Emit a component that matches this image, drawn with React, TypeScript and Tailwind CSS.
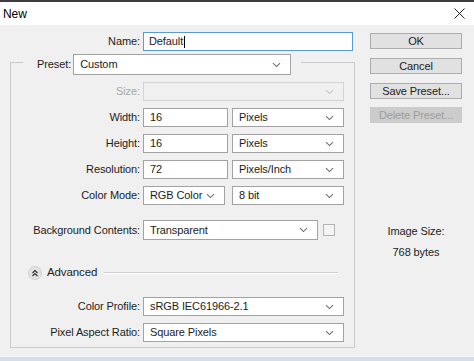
import React from "react";

const Chevron = ({ light = false }: { light?: boolean }) => (
  <svg width="9" height="6" viewBox="0 0 9 6" className="shrink-0">
    <path d="M1 1.2 L4.5 4.6 L8 1.2" fill="none" stroke={light ? "#c4c4c4" : "#6e6e6e"} strokeWidth="1.1" />
  </svg>
);

const Select = ({ value, w, h = 19, disabled = false }: { value: string; w: string; h?: number; disabled?: boolean }) => (
  <div
    className={`${w} flex items-center justify-between pl-[6px] pr-[9px] border ${
      disabled ? "bg-[#f0f0f0] border-[#d3d3d3]" : "bg-white border-[#a2a2a2]"
    }`}
    style={{ height: h }}
  >
    <span className="leading-none">{value}</span>
    <Chevron light={disabled} />
  </div>
);

const Input = ({ value, w }: { value: string; w: string }) => (
  <div className={`${w} h-[19px] flex items-center pl-[6px] bg-white border border-[#a2a2a2]`}>
    <span className="leading-none">{value}</span>
  </div>
);

const Label = ({ children, gray = false }: { children: React.ReactNode; gray?: boolean }) => (
  <div className={`w-[132px] text-right pr-[3px] shrink-0 ${gray ? "text-[#a8a8a8]" : "text-[#1c1c1c]"}`}>{children}</div>
);

const Btn = ({ children, cls = "", disabled = false }: { children: React.ReactNode; cls?: string; disabled?: boolean }) => (
  <div
    className={`h-[16px] w-[92px] flex items-center justify-center border ${
      disabled ? "bg-[#cccccc] border-[#cccccc] text-[#9d9d9d]" : "bg-[#e1e1e1] border-[#adadad] text-[#1c1c1c]"
    } ${cls}`}
  >
    <span className="leading-none">{children}</span>
  </div>
);

export default function App() {
  return (
    <div
      className="w-[474px] h-[361px] bg-[#f0f0f0] overflow-hidden flex flex-col text-[11px] tracking-[-0.1px] text-[#1c1c1c]"
      style={{ fontFamily: '"Liberation Sans", Arial, sans-serif' }}
    >
      <div className="h-[2px] bg-[#3d3d3d] shrink-0" />
      <div className="h-[23px] bg-white shrink-0 flex items-center justify-between pl-[3px] pr-[9px]">
        <span className="text-[12px] text-black leading-none">New</span>
        <svg width="11" height="11" viewBox="0 0 11 11">
          <path d="M0.5 0.5 L10.5 10.5 M10.5 0.5 L0.5 10.5" stroke="#222" strokeWidth="1" />
        </svg>
      </div>
      <div className="flex h-[331px] shrink-0">
        {/* left */}
        <div className="w-[362px] pt-[7px] flex flex-col">
          <div className="flex items-center">
            <div className="w-[143px] text-right pr-[3px]">Name:</div>
            <div className="w-[210px] h-[19px] flex items-center pl-[5px] bg-white border border-[#5b9bd5]">
              <span className="leading-none">Default</span>
              <span className="w-[1px] h-[12px] bg-black ml-[1px]" />
            </div>
          </div>
          <div className="mt-[11px] ml-[10px] w-[345px] border border-[#cacaca] pb-[5px] flex flex-col">
            {/* legend row */}
            <div className="-mt-[9px] ml-[12px] w-[278px] bg-[#f0f0f0] pl-[14px] pr-[8px] flex items-center">
              <span className="pr-[2px]">Preset:</span>
              <Select value="Custom" w="w-[218px]" h={21} />
            </div>
            <div className="mt-[7px] flex items-center">
              <Label gray>Size:</Label>
              <Select value="" w="w-[201px]" disabled />
            </div>
            <div className="mt-[7px] flex items-center">
              <Label>Width:</Label>
              <Input value="16" w="w-[85px]" />
              <div className="ml-[4px]">
                <Select value="Pixels" w="w-[112px]" />
              </div>
            </div>
            <div className="mt-[7px] flex items-center">
              <Label>Height:</Label>
              <Input value="16" w="w-[85px]" />
              <div className="ml-[4px]">
                <Select value="Pixels" w="w-[112px]" />
              </div>
            </div>
            <div className="mt-[7px] flex items-center">
              <Label>Resolution:</Label>
              <Input value="72" w="w-[85px]" />
              <div className="ml-[4px]">
                <Select value="Pixels/Inch" w="w-[112px]" />
              </div>
            </div>
            <div className="mt-[7px] flex items-center">
              <Label>Color Mode:</Label>
              <Select value="RGB Color" w="w-[82px]" />
              <div className="ml-[7px]">
                <Select value="8 bit" w="w-[112px]" />
              </div>
            </div>
            <div className="mt-[15px] flex items-center">
              <Label>Background Contents:</Label>
              <Select value="Transparent" w="w-[175px]" h={20} />
              <div className="ml-[5px] w-[12px] h-[12px] border border-[#b4b4b4] bg-[#f4f4f4]" />
            </div>
            <div className="mt-[26px] ml-[17px] mr-[16px] flex items-center">
              <div className="w-[14px] h-[14px] rounded-full bg-[#e2e2e2] border border-[#d2d2d2] flex items-center justify-center">
                <svg width="8" height="8" viewBox="0 0 8 8">
                  <path d="M1.5 4 L4 1.5 L6.5 4 M1.5 7 L4 4.5 L6.5 7" fill="none" stroke="#333" strokeWidth="1.2" />
                </svg>
              </div>
              <span className="ml-[5px] text-[11.5px] leading-none">Advanced</span>
              <div className="flex-1 ml-[7px] h-[2px] border-t border-[#cfcfcf] border-b border-b-white" />
            </div>
            <div className="mt-[17px] flex items-center">
              <Label>Color Profile:</Label>
              <Select value="sRGB IEC61966-2.1" w="w-[201px]" />
            </div>
            <div className="mt-[7px] flex items-center">
              <Label>Pixel Aspect Ratio:</Label>
              <Select value="Square Pixels" w="w-[201px]" />
            </div>
          </div>
        </div>
        {/* right */}
        <div className="ml-[8px] w-[92px] pt-[8px] flex flex-col">
          <Btn cls="border-[#3c7fc4]">OK</Btn>
          <Btn cls="mt-[9px]">Cancel</Btn>
          <Btn cls="mt-[9px]">Save Preset...</Btn>
          <Btn cls="mt-[8px]" disabled>
            Delete Preset...
          </Btn>
          <div className="mt-[98px] text-center leading-[21px]">
            <div>Image Size:</div>
            <div>768 bytes</div>
          </div>
        </div>
      </div>
      <div className="h-[1px] bg-[#f7f7f7] shrink-0" />
      <div className="flex-1 bg-[#d6dde6]" />
    </div>
  );
}
